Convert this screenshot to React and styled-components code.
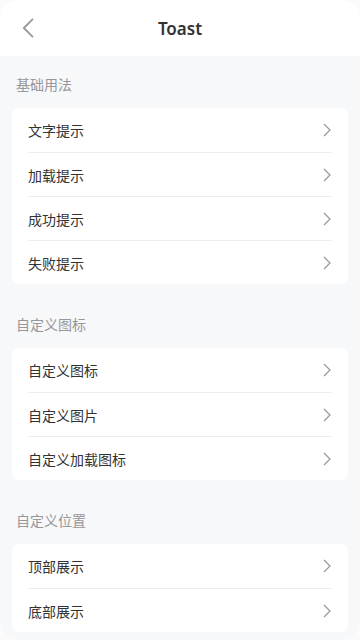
import React from "react";
import styled, { createGlobalStyle } from "styled-components";

const Global = createGlobalStyle`
  html, body { margin: 0; padding: 0; background: #fbfbfc; }
  body { font-family: "Noto Sans", "Noto Sans CJK SC", sans-serif; -webkit-font-smoothing: antialiased; }
  * { box-sizing: border-box; }
`;

const Frame = styled.div`
  width: 360px;
  height: 640px;
  border-radius: 20px;
  overflow: hidden;
  background: #f7f8fa;
  display: flex;
  flex-direction: column;
`;

const NavBar = styled.div`
  height: 56px;
  flex: none;
  background: #fff;
  display: grid;
  grid-template-columns: 56px 1fr 56px;
  align-items: center;
`;

const BackBtn = styled.div`
  display: flex;
  align-items: center;
  padding-left: 20px;
  height: 100%;
`;

const Title = styled.div`
  text-align: center;
  font-size: 17px;
  font-weight: 600;
  color: #323233;
  line-height: 24px;
  padding-top: 1px;
`;

const Section = styled.div`
  padding: 0 12px;
`;

const SectionTitle = styled.div`
  padding: ${(p) => (p.$first ? "20px" : "32px")} 4px 16px;
  font-family: "Noto Sans CJK SC", sans-serif;
  font-size: 14px;
  line-height: 16px;
  color: #969799;
`;

const Card = styled.div`
  background: #fff;
  border-radius: 8px;
  overflow: hidden;
`;

const Row = styled.div`
  height: 44px;
  margin: 0 16px;
  display: flex;
  align-items: center;
  justify-content: space-between;
  border-top: ${(p) => (p.$first ? "none" : "1px solid #ebedf0")};
  font-family: "Noto Sans CJK SC", sans-serif;
  font-size: 14px;
  color: #323233;
`;

const Arrow = () => (
  <svg width="16" height="16" viewBox="0 0 16 16" style={{ marginRight: -3 }}>
    <path d="M5 2 L11 8 L5 14" fill="none" stroke="#969799" strokeWidth="1.2" />
  </svg>
);

const Back = () => (
  <svg width="16" height="22" viewBox="0 0 16 22">
    <path d="M13 1.8 L3.8 11 L13 20.2" fill="none" stroke="#969799" strokeWidth="1.8" />
  </svg>
);

const groups = [
  { title: "基础用法", items: ["文字提示", "加载提示", "成功提示", "失败提示"] },
  { title: "自定义图标", items: ["自定义图标", "自定义图片", "自定义加载图标"] },
  { title: "自定义位置", items: ["顶部展示", "底部展示"] },
];

export default function App() {
  return (
    <>
      <Global />
      <Frame>
        <NavBar>
          <BackBtn>
            <Back />
          </BackBtn>
          <Title>Toast</Title>
          <div />
        </NavBar>
        {groups.map((g, gi) => (
          <Section key={g.title}>
            <SectionTitle $first={gi === 0}>{g.title}</SectionTitle>
            <Card>
              {g.items.map((it, i) => (
                <Row key={it} $first={i === 0}>
                  <span>{it}</span>
                  <Arrow />
                </Row>
              ))}
            </Card>
          </Section>
        ))}
      </Frame>
    </>
  );
}
